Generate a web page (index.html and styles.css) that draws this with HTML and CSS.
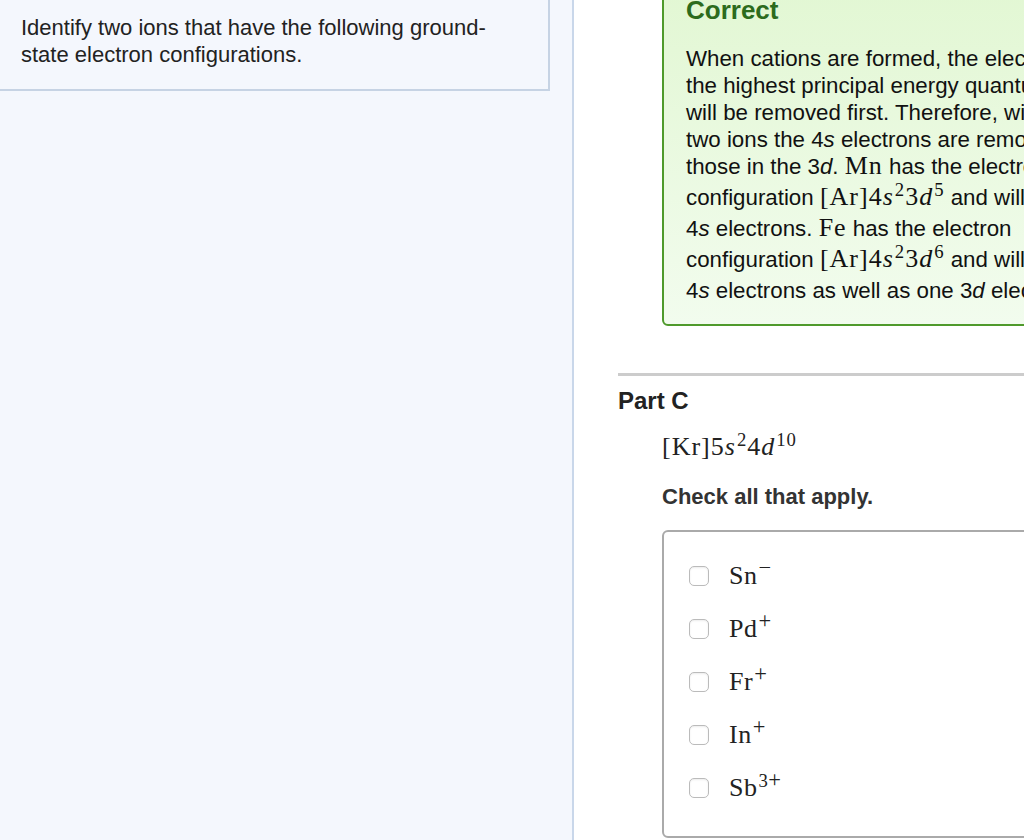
FILE: index.html
```html
<!DOCTYPE html>
<html lang="en">
<head>
    <meta charset="UTF-8">
    <title>Part C</title>
    <link rel="stylesheet" href="styles.css">
</head>
<body>
<div class="page">
    <aside class="sidebar">
        <div class="intro">
            <p>Identify two ions that have the following ground-state electron configurations.</p>
        </div>
    </aside>

    <main class="main">
        <!-- feedback for the previous part -->
        <div class="feedback">
            <h3 class="feedback-title">Correct</h3>
            <p class="feedback-text">When cations are formed, the electrons with the highest principal energy quantum number will be removed first. Therefore, with these two ions the 4<i>s</i> electrons are removed before those in the 3<i>d</i>. <span class="math">Mn</span> has the electron configuration <span class="math tall">[Ar]4<i>s</i><sup>2</sup>3<i>d</i><sup>5</sup></span> and will lose both 4<i>s</i> electrons. <span class="math">Fe</span> has the electron configuration <span class="math tall">[Ar]4<i>s</i><sup>2</sup>3<i>d</i><sup>6</sup></span> and will lose both 4<i>s</i> electrons as well as one 3<i>d</i> electron.</p>
        </div>

        <hr class="part-rule">
        <h2 class="part-title">Part C</h2>

        <div class="part-body">
            <div class="formula math">[Kr]5<i>s</i><sup>2</sup>4<i>d</i><sup>10</sup></div>
            <p class="instructions">Check all that apply.</p>

            <div class="choices">
                <label class="choice"><span class="checkbox"></span><span class="math">Sn<sup><span class="sign">−</span></sup></span></label>
                <label class="choice"><span class="checkbox"></span><span class="math">Pd<sup><span class="sign">+</span></sup></span></label>
                <label class="choice"><span class="checkbox"></span><span class="math">Fr<sup><span class="sign">+</span></sup></span></label>
                <label class="choice"><span class="checkbox"></span><span class="math">In<sup><span class="sign">+</span></sup></span></label>
                <label class="choice"><span class="checkbox"></span><span class="math">Sb<sup>3<span class="sign">+</span></sup></span></label>
            </div>
        </div>
    </main>
</div>
</body>
</html>
```

FILE: styles.css
```css
body {
    margin: 0;
    overflow: hidden;
    font-family: "Liberation Sans", Arial, sans-serif;
    color: #222;
    background: #fff;
}

/* page is scrolled a little, so everything starts above the fold */
.page {
    display: flex;
    width: 1500px;
    height: 900px;
    margin-top: -30px;
}

.sidebar {
    flex: none;
    width: 572px;
    background: #f4f7fd;
    border-right: 2px solid #c9d7ea;
}

.intro {
    width: 487px;
    padding: 44px 40px 21px 21px;
    border-right: 2px solid #c6d3e4;
    border-bottom: 2px solid #c6d3e4;
}

.intro p {
    margin: 0;
    font-size: 22px;
    line-height: 27px;
}

.main {
    flex: 1;
    padding-left: 44px;
}

.math {
    font-family: "Liberation Serif", "Times New Roman", serif;
    font-size: 26px;
    letter-spacing: 1px;
}

.math sup {
    margin-left: 1px;
    font-size: 0.72em;
    line-height: 0;
    vertical-align: 0.48em;
}

.math .sign {
    font-size: 1.2em;
    line-height: 0;
}

.feedback {
    width: 449px;
    margin: 14px 0 0 44px;
    padding: 9px 22px 20px 22px;
    border: 2px solid #4f9a2c;
    border-radius: 6px;
    background: linear-gradient(#e2f7d3, #f2fcee);
}

.feedback-title {
    margin: 0 0 20px;
    font-size: 26px;
    line-height: 30px;
    font-weight: bold;
    color: #2c6b1d;
}

.feedback-text {
    margin: 0;
    font-size: 22.3px;
    line-height: 27px;
    color: #111;
}

.feedback-text .math {
    line-height: 0;
}

/* formulas with superscripts make their line a bit taller */
.feedback-text .tall {
    display: inline-block;
    padding: 3px 0 5px;
    line-height: 27px;
}

.part-rule {
    height: 3px;
    margin: 47px 0 0;
    border: 0;
    background: #ccc;
}

.part-title {
    margin: 11px 0 0;
    font-size: 24px;
    line-height: 28px;
    font-weight: bold;
    color: #222;
}

.part-body {
    margin-left: 44px;
}

.formula {
    margin-top: 15px;
    line-height: 34px;
}

.instructions {
    margin: 19px 0 0;
    font-size: 22px;
    line-height: 28px;
    font-weight: bold;
    color: #333;
}

.choices {
    margin-top: 19px;
    padding: 17px 0 22px 25px;
    border: 2px solid #aaa;
    border-radius: 6px;
}

.choice {
    display: flex;
    align-items: center;
    gap: 20px;
    height: 53px;
}

.checkbox {
    width: 18px;
    height: 18px;
    border: 1px solid #bbb;
    border-radius: 5px;
    background: #fff;
    box-shadow: inset 0 1px 2px rgba(0, 0, 0, 0.08);
}

.choice .math {
    font-size: 26px;
    letter-spacing: 0.5px;
    color: #222;
}
```
